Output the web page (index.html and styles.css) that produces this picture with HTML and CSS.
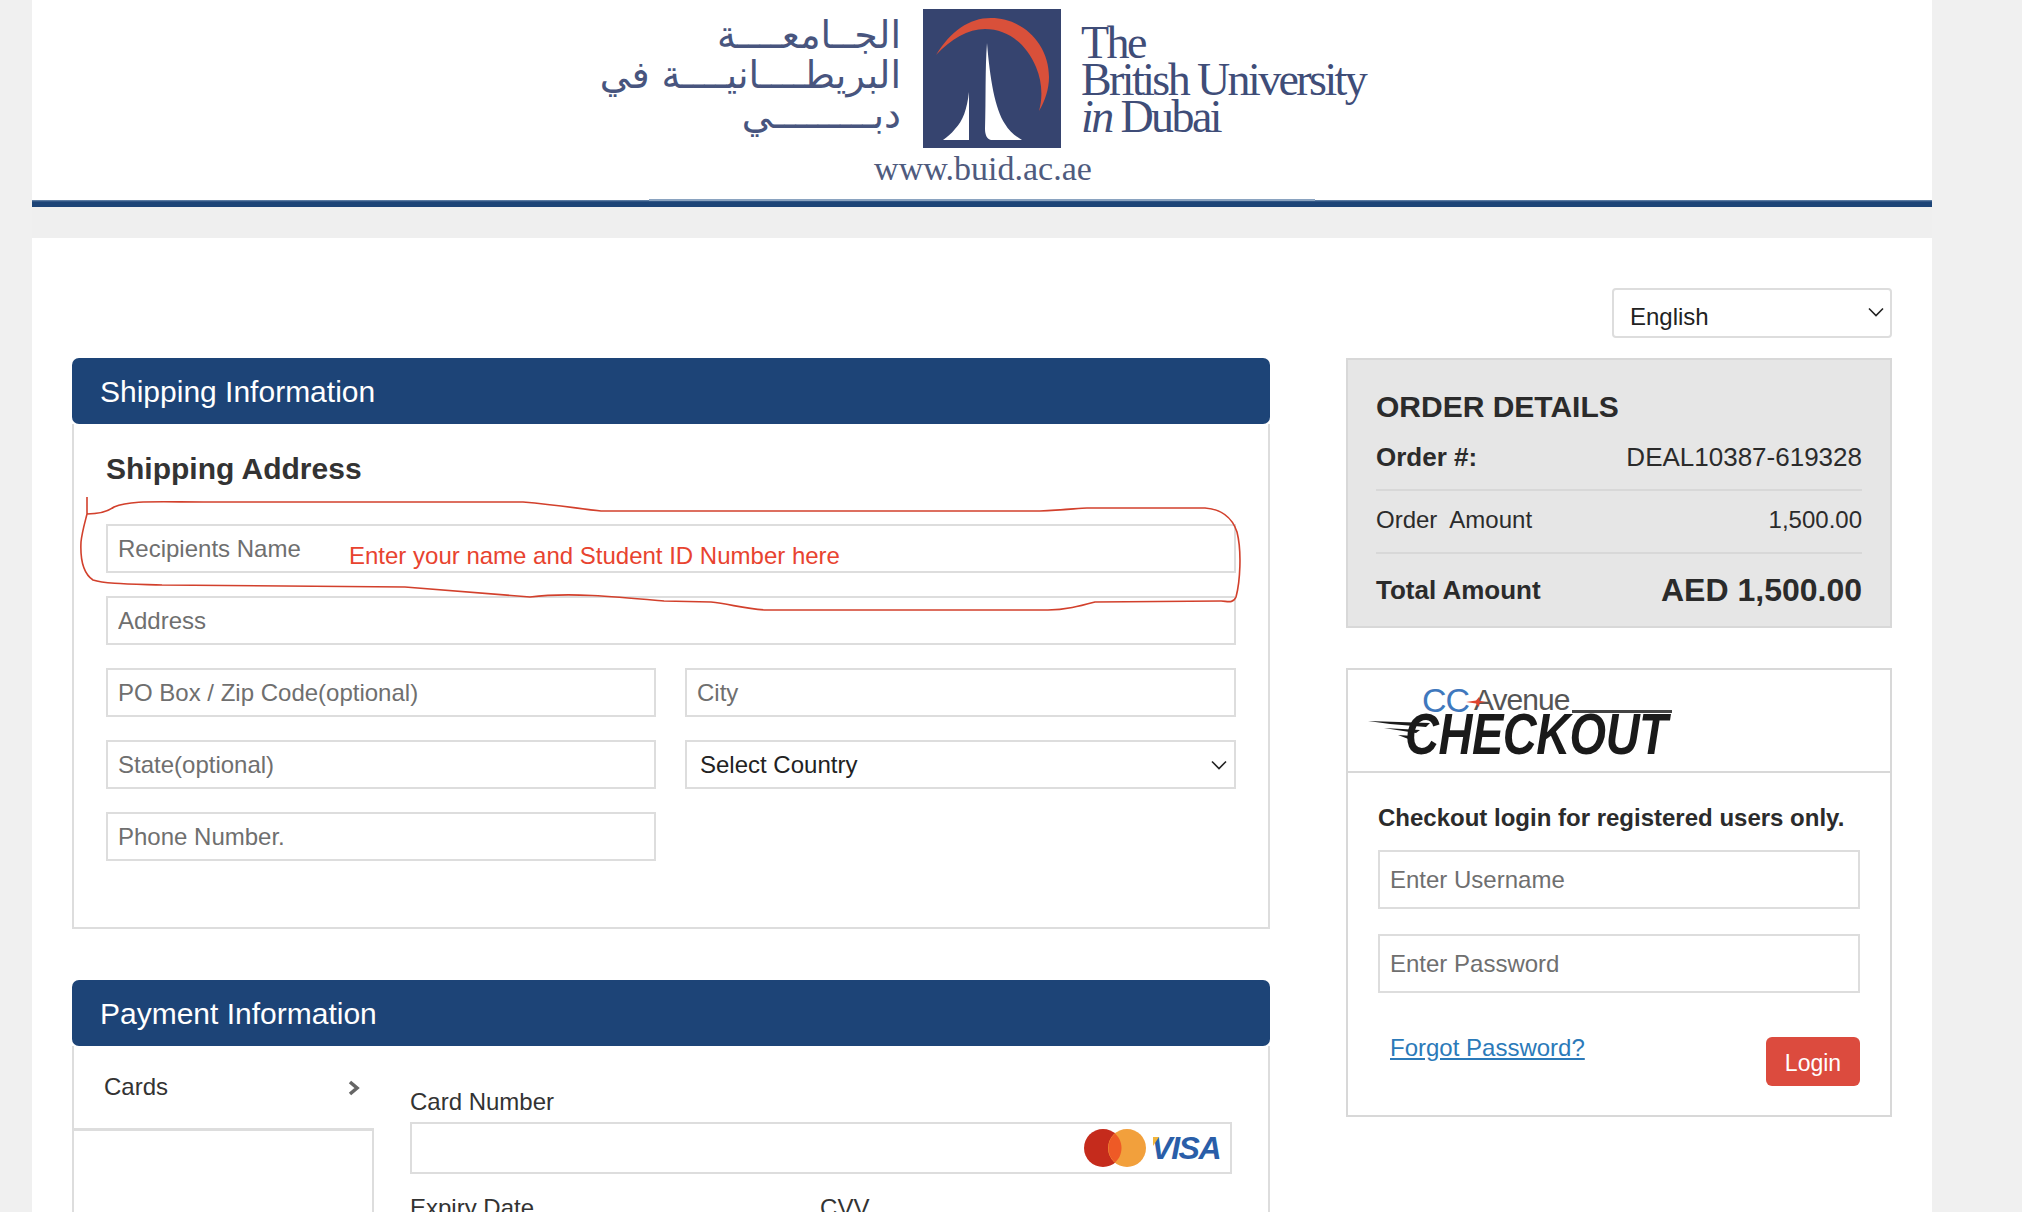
FILE: index.html
```html
<!DOCTYPE html>
<html lang="en">
<head>
    <meta charset="UTF-8">
    <meta name="viewport" content="width=device-width, initial-scale=1.0">
    <title>Checkout</title>
    <link rel="stylesheet" href="styles.css">
</head>
<body>
<div class="page">
    <header class="top-header">
        <div class="logo">
            <div class="logo-row">
                <div class="logo-arabic" lang="ar" dir="rtl">
                    <div>الجــامعــــة</div>
                    <div>البريطــــانيــــة في</div>
                    <div>دبـــــــــي</div>
                </div>
                <svg class="logo-mark" viewBox="0 0 138 139">
                    <rect width="138" height="139" fill="#36446f"/>
                    <path d="M13 46C28 22 46 9 68 9C100 9 126 35 126 68C126 80 122 92 116 102C120 88 119 72 113 58C103 34 84 20 62 20C45 20 28 30 13 46Z" fill="#d9503a"/>
                    <path d="M64 34C67 70 72 100 82 115C86 122 92 127 99 131L68 131C64 130 62 126 62 120C63 90 62 60 64 34Z" fill="#fff"/>
                    <path d="M46 83C44 100 40 112 32 120C28 125 24 128 20 131L46 131Z" fill="#fff"/>
                </svg>
                <div class="logo-english">
                    <div>The</div>
                    <div>British University</div>
                    <div><i>in</i> Dubai</div>
                </div>
            </div>
            <div class="logo-url">www.buid.ac.ae</div>
        </div>
    </header>
    <div class="header-bar"></div>
    <div class="band"></div>

    <main class="content">
        <div class="left-col">
            <section class="panel">
                <div class="panel-head">Shipping Information</div>
                <div class="panel-body shipping-body">
                    <h2 class="sub-title">Shipping Address</h2>
                    <div class="form-grid">
                        <input class="field wide" type="text" placeholder="Recipients Name">
                        <input class="field wide" type="text" placeholder="Address">
                        <input class="field" type="text" placeholder="PO Box / Zip Code(optional)">
                        <input class="field" type="text" placeholder="City">
                        <input class="field" type="text" placeholder="State(optional)">
                        <div class="select-wrap">
                            <select class="field select-field"><option>Select Country</option></select>
                            <svg class="chevron" viewBox="0 0 16 10"><path d="M1 1.5L8 8.5L15 1.5" fill="none" stroke="#222" stroke-width="1.6"/></svg>
                        </div>
                        <input class="field" type="text" placeholder="Phone Number.">
                    </div>
                </div>
            </section>

            <section class="panel payment">
                <div class="panel-head">Payment Information</div>
                <div class="panel-body payment-body">
                    <div class="pay-side">
                        <div class="pay-tab">
                            <span>Cards</span>
                            <svg class="tab-arrow" viewBox="0 0 12 16"><path d="M2 2L9 8L2 14" fill="none" stroke="#666" stroke-width="3.6"/></svg>
                        </div>
                        <div class="pay-rest"></div>
                    </div>
                    <div class="pay-form">
                        <label class="pay-label">Card Number</label>
                        <div class="card-input">
                            <svg class="mc-icon" viewBox="0 0 62 38">
                                <circle cx="19" cy="19" r="19" fill="#c52b1c"/>
                                <circle cx="43" cy="19" r="19" fill="#f2a03c"/>
                                <path d="M31 4.5C35 8 37.5 13 37.5 19C37.5 25 35 30 31 33.5C27 30 24.5 25 24.5 19C24.5 13 27 8 31 4.5Z" fill="#ee5a26"/>
                            </svg>
                            <span class="visa-text">VISA</span>
                        </div>
                        <div class="pay-labels">
                            <span class="pay-label">Expiry Date</span>
                            <span class="pay-label">CVV</span>
                        </div>
                    </div>
                </div>
            </section>
        </div>

        <aside class="right-col">
            <div class="lang-wrap">
                <select class="lang-select"><option>English</option></select>
                <svg class="chevron lang-chevron" viewBox="0 0 16 10"><path d="M1 1.5L8 8.5L15 1.5" fill="none" stroke="#222" stroke-width="1.6"/></svg>
            </div>

            <div class="order-box">
                <h3 class="order-title">ORDER DETAILS</h3>
                <div class="order-row first-row"><b>Order #:</b><span>DEAL10387-619328</span></div>
                <div class="order-row second-row"><span>Order&nbsp; Amount</span><span>1,500.00</span></div>
                <div class="order-row total-row"><b>Total Amount</b><b class="total-value">AED 1,500.00</b></div>
            </div>

            <div class="login-box">
                <div class="login-head">
                    <div class="cc-logo">
                        <div class="cc-line">
                            <span class="cc-blue">CC</span>
                            <svg class="cc-star" viewBox="0 0 20 10"><path d="M0 5L10 3.5L13 0L13.5 3.8L20 5L13.5 6L13 10L10 6.5Z" fill="#e0452f"/></svg>
                            <span class="cc-gray">Avenue</span>
                            <span class="cc-rule"></span>
                        </div>
                        <div class="cc-check">
                            <svg class="cc-speed" viewBox="0 0 62 30"><path d="M0 2L62 4L58 8L22 5ZM16 9L52 11L48 14ZM30 16L46 17L43 21Z" fill="#1a1a1a"/></svg>
                            <span class="cc-word">CHECKOUT</span>
                        </div>
                    </div>
                </div>
                <div class="login-body">
                    <p class="login-note">Checkout login for registered users only.</p>
                    <input class="login-field" type="text" placeholder="Enter Username">
                    <input class="login-field" type="password" placeholder="Enter Password">
                    <div class="login-foot">
                        <a class="forgot" href="#">Forgot Password?</a>
                        <button class="login-btn" type="button">Login</button>
                    </div>
                </div>
            </div>
        </aside>
    </main>

    <!-- hand drawn note on top of the form -->
    <svg class="scribble" viewBox="0 0 1200 130">
        <path d="M7 5L7 22C20 22 27 20 34 15C50 8 75 10 129 10L443 10C480 13 500 17 521 19L960 19C985 18 1000 16 1007 16L1125 16C1140 17 1152 25 1157 40C1162 60 1160 90 1156 105C1153 112 1147 109 1141 109L1015 110C1000 114 985 118 968 118L686 118C665 117 650 112 631 110L584 109C540 105 490 100 450 105L325 95L82 93C50 92 25 92 13 88C4 82 0 70 1 50C2 40 5 30 7 22" fill="none" stroke="#d2402c" stroke-width="1.6"/>
    </svg>
    <div class="scribble-note">Enter your name and Student ID Number here</div>
</div>
</body>
</html>
```

FILE: styles.css
```css
html, body {
    margin: 0;
    padding: 0;
    height: 1212px;
    overflow: hidden;
    background-color: #f0f0f0;
    font-family: "Liberation Sans", Arial, sans-serif;
    color: #333;
}

* {
    box-sizing: border-box;
}

.page {
    position: relative;
    width: 1900px;
    height: 1212px;
    margin-left: 32px;
    background-color: #fff;
}

/* header */
.top-header {
    height: 200px;
    display: flex;
    justify-content: center;
}

.logo {
    display: flex;
    flex-direction: column;
    align-items: center;
    margin-left: 2px;
    padding-top: 9px;
}

.logo-row {
    display: flex;
    gap: 22px;
    width: 770px;
    height: 139px;
    margin-left: 6px;
}

.logo-arabic {
    width: 300px;
    flex-shrink: 0;
    font-family: "DejaVu Sans", sans-serif;
    font-size: 38px;
    line-height: 40px;
    padding-top: 6px;
    text-align: right;
    white-space: nowrap;
    color: #48557e;
}

.logo-mark {
    width: 138px;
    height: 139px;
    flex-shrink: 0;
}

.logo-english {
    font-family: "Liberation Serif", serif;
    font-size: 46px;
    line-height: 37px;
    letter-spacing: -2.6px;
    color: #3f4d78;
    margin-left: -2px;
    padding-top: 15px;
    white-space: nowrap;
}

.logo-url {
    font-family: "Liberation Serif", serif;
    font-size: 34px;
    line-height: 36px;
    margin-top: 3px;
    color: #4f5b7e;
}

.header-bar {
    position: relative;
    height: 7px;
    background: linear-gradient(#6f8db0, #1d4477 2px);
}

.header-bar::before {
    content: "";
    position: absolute;
    left: 617px;
    top: -1px;
    width: 666px;
    height: 2px;
    background-color: #8aa3c0;
}

.band {
    height: 31px;
    background-color: #efefef;
}

/* main columns */
.content {
    display: flex;
    gap: 76px;
    padding: 0 40px;
}

.left-col {
    width: 1198px;
    padding-top: 120px;
}

.right-col {
    width: 546px;
    padding-top: 50px;
}

.panel-head {
    height: 66px;
    line-height: 68px;
    padding-left: 28px;
    font-size: 30px;
    color: #fff;
    background-color: #1d4477;
    border-radius: 7px;
}

.panel-body {
    border: 2px solid #ddd;
    border-top: none;
}

.shipping-body {
    height: 505px;
    padding: 0 32px;
}

.sub-title {
    margin: 0;
    padding-top: 26px;
    height: 100px;
    font-size: 30px;
    line-height: 38px;
    color: #333;
}

.form-grid {
    display: grid;
    grid-template-columns: 550px 551px;
    column-gap: 29px;
    row-gap: 23px;
}

.field {
    width: 100%;
    height: 49px;
    padding: 0 10px;
    font-family: inherit;
    font-size: 24px;
    color: #222;
    background-color: #fff;
    border: 2px solid #ddd;
    border-radius: 0;
    outline: none;
}

.field::placeholder,
.login-field::placeholder {
    color: #6f6f6f;
    opacity: 1;
}

.wide {
    grid-column: 1 / 3;
}

.select-wrap,
.lang-wrap {
    position: relative;
}

.select-field {
    appearance: none;
    padding-left: 13px;
}

.chevron {
    position: absolute;
    right: 9px;
    top: 20px;
    width: 16px;
    height: 10px;
}

/* payment panel */
.payment {
    margin-top: 51px;
}

.payment-body {
    display: flex;
    height: 300px;
}

.pay-side {
    width: 300px;
    flex-shrink: 0;
}

.pay-tab {
    height: 82px;
    padding: 26px 14px 0 30px;
    display: flex;
    justify-content: space-between;
    font-size: 24px;
    line-height: 30px;
    color: #333;
}

.tab-arrow {
    width: 12px;
    height: 16px;
    margin-top: 8px;
}

.pay-rest {
    height: 218px;
    border-top: 3px solid #ddd;
    border-right: 2px solid #ddd;
}

.pay-form {
    width: 822px;
    margin-left: 36px;
    padding-top: 42px;
}

.pay-label {
    font-size: 24px;
    line-height: 28px;
    color: #333;
}

.card-input {
    height: 52px;
    margin-top: 6px;
    padding-right: 10px;
    display: flex;
    justify-content: flex-end;
    align-items: center;
    gap: 5px;
    border: 2px solid #ddd;
}

.mc-icon {
    width: 62px;
    height: 38px;
}

.visa-text {
    position: relative;
    font-size: 32px;
    font-weight: bold;
    font-style: italic;
    color: #2a5ea8;
    letter-spacing: -1.5px;
}

/* the yellow corner on the V */
.visa-text::before {
    content: "";
    position: absolute;
    left: 2px;
    top: 7px;
    border-top: 9px solid #f2b53c;
    border-right: 6px solid transparent;
}

.pay-labels {
    display: flex;
    gap: 286px;
    margin-top: 20px;
}

/* right column */
.lang-wrap {
    width: 280px;
    height: 50px;
    margin-left: auto;
}

.lang-select {
    appearance: none;
    width: 100%;
    height: 100%;
    padding: 6px 16px 0;
    font-family: inherit;
    font-size: 24px;
    color: #222;
    background-color: #fff;
    border: 2px solid #ddd;
    border-radius: 4px;
}

.lang-chevron {
    right: 8px;
    top: 19px;
}

.order-box {
    height: 270px;
    margin-top: 20px;
    padding: 29px 28px 0 28px;
    background-color: #e6e6e6;
    border: 2px solid #d8d8d8;
}

.order-title {
    margin: 0;
    font-size: 30px;
    line-height: 36px;
    color: #2b2b2b;
}

.order-row {
    display: flex;
    justify-content: space-between;
    align-items: center;
    font-size: 26px;
    color: #2b2b2b;
    border-bottom: 2px solid #d8d8d8;
}

.first-row {
    height: 66px;
}

.second-row {
    height: 63px;
    padding-bottom: 3px;
    font-size: 24px;
}

.total-row {
    height: 72px;
    border-bottom: none;
}

.total-value {
    font-size: 32px;
}

.login-box {
    height: 449px;
    margin-top: 40px;
    border: 2px solid #d8d8d8;
}

.login-head {
    height: 103px;
    padding: 14px 0 0 20px;
    border-bottom: 2px solid #d8d8d8;
}

.cc-logo {
    width: 304px;
}

.cc-line {
    display: flex;
    align-items: flex-end;
    height: 32px;
    padding-left: 54px;
    font-size: 30px;
    line-height: 32px;
    letter-spacing: -1px;
}

.cc-blue {
    font-size: 34px;
    color: #3f78bd;
}

.cc-star {
    width: 20px;
    height: 10px;
    margin: 0 -12px 9px -3px;
    position: relative;
}

.cc-gray {
    color: #555;
}

.cc-rule {
    flex: 1;
    height: 3px;
    margin: 0 0 3px 3px;
    background-color: #444;
}

.cc-check {
    display: flex;
    height: 44px;
    margin-top: 1px;
}

.cc-speed {
    width: 62px;
    height: 30px;
    flex-shrink: 0;
    margin-top: 2px;
    margin-right: -25px;
}

.cc-word {
    display: inline-block;
    font-size: 47px;
    line-height: 44px;
    font-weight: bold;
    font-style: italic;
    letter-spacing: -0.5px;
    color: #1a1a1a;
    transform: scaleY(1.22);
    transform-origin: center bottom;
}

.login-body {
    padding: 31px 30px 0;
}

.login-note {
    margin: 0;
    font-size: 24px;
    line-height: 28px;
    font-weight: bold;
    white-space: nowrap;
    color: #2b2b2b;
}

.login-field {
    display: block;
    width: 482px;
    height: 59px;
    margin-top: 25px;
    padding: 0 10px;
    font-family: inherit;
    font-size: 24px;
    border: 2px solid #ddd;
    outline: none;
}

.login-note + .login-field {
    margin-top: 18px;
}

.login-foot {
    display: flex;
    justify-content: space-between;
    align-items: flex-start;
    margin-top: 40px;
    padding-left: 12px;
}

.forgot {
    font-size: 24px;
    line-height: 30px;
    color: #2b7ab9;
}

.login-btn {
    width: 94px;
    height: 49px;
    margin-top: 4px;
    padding-top: 4px;
    font-family: inherit;
    font-size: 23px;
    color: #fff;
    background-color: #dc4b3e;
    border: none;
    border-radius: 6px;
}

/* annotation over the form */
.scribble {
    position: absolute;
    left: 48px;
    top: 492px;
    width: 1200px;
    height: 130px;
}

.scribble-note {
    position: absolute;
    left: 317px;
    top: 541px;
    font-size: 24px;
    line-height: 30px;
    color: #e8432f;
}
```
